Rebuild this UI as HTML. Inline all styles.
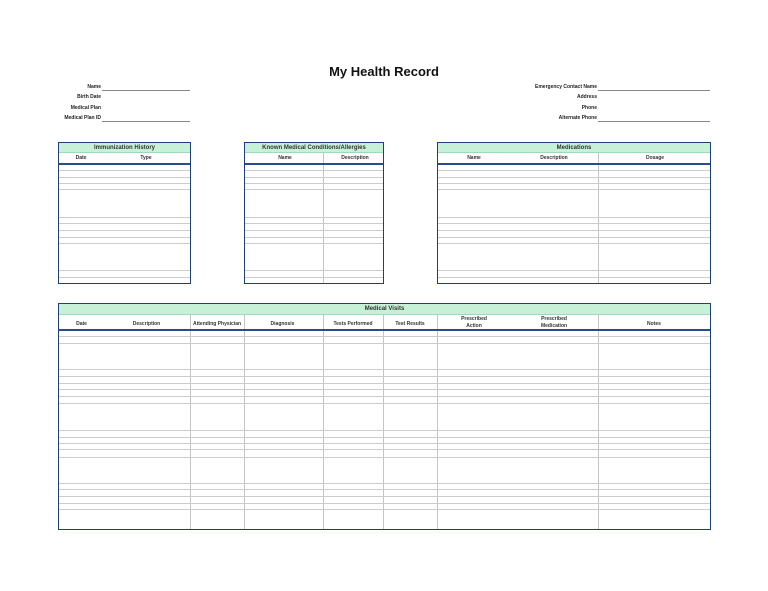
<!DOCTYPE html>
<html><head><meta charset="utf-8"><style>
*{margin:0;padding:0;box-sizing:border-box}
body{width:768px;height:591px;background:#fff;position:relative;overflow:hidden;font-family:"Liberation Sans",Arial,sans-serif;font-weight:bold;color:#222}
.a{position:absolute}
.t{position:absolute;font-size:13px;top:64px;left:0;width:768px;text-align:center;color:#111}
.lb{position:absolute;font-size:5px;text-align:right;white-space:nowrap}
.ul{position:absolute;height:1px;background:#888}
.box{position:absolute;border:1.5px solid #1f3f7a}
.hd{position:absolute;left:0;right:0;top:0;height:10px;background:#c6f0d8;font-size:6px;text-align:center;line-height:10px;color:#333;border-bottom:1px solid #9fd9b8}
.hl{position:absolute;left:0;right:0;height:1px;background:#ccc}
.dl{position:absolute;left:0;right:0;height:1.5px;background:#2a4d88}
.vl{position:absolute;top:10px;bottom:0;width:1px;background:#c4c4c4}
.ch{position:absolute;font-size:5px;text-align:center;white-space:nowrap;color:#333}
</style></head><body>
<div class="t">My Health Record</div>

<div class="lb" style="right:667px;top:84px">Name</div><div class="ul" style="left:102px;width:88px;top:90px"></div>
<div class="lb" style="right:667px;top:94px">Birth Date</div>
<div class="lb" style="right:667px;top:105px">Medical Plan</div>
<div class="lb" style="right:667px;top:115px">Medical Plan ID</div><div class="ul" style="left:102px;width:88px;top:121px"></div>

<div class="lb" style="right:171px;top:84px">Emergency Contact Name</div><div class="ul" style="left:598px;width:112px;top:90px"></div>
<div class="lb" style="right:171px;top:94px">Address</div>
<div class="lb" style="right:171px;top:105px">Phone</div>
<div class="lb" style="right:171px;top:115px">Alternate Phone</div><div class="ul" style="left:598px;width:112px;top:121px"></div>

<!-- Immunization -->
<div class="box" style="left:58px;top:142px;width:133px;height:142px">
<div class="hd">Immunization History</div>
<div class="ch" style="left:10px;top:12px;width:24px">Date</div>
<div class="ch" style="left:75px;top:12px;width:24px">Type</div>
<div class="dl" style="top:20px"></div>
<div class="hl" style="top:27px"></div><div class="hl" style="top:34px"></div><div class="hl" style="top:40px"></div><div class="hl" style="top:46px"></div><div class="hl" style="top:74px"></div><div class="hl" style="top:80px"></div><div class="hl" style="top:87px"></div><div class="hl" style="top:94px"></div><div class="hl" style="top:100px"></div><div class="hl" style="top:127px"></div><div class="hl" style="top:134px"></div>
</div>

<!-- Conditions -->
<div class="box" style="left:244px;top:142px;width:140px;height:142px">
<div class="hd">Known Medical Conditions/Allergies</div>
<div class="vl" style="left:78px"></div>
<div class="ch" style="left:20px;top:12px;width:40px">Name</div>
<div class="ch" style="left:85px;top:12px;width:50px">Description</div>
<div class="dl" style="top:20px"></div>
<div class="hl" style="top:27px"></div><div class="hl" style="top:34px"></div><div class="hl" style="top:40px"></div><div class="hl" style="top:46px"></div><div class="hl" style="top:74px"></div><div class="hl" style="top:80px"></div><div class="hl" style="top:87px"></div><div class="hl" style="top:94px"></div><div class="hl" style="top:100px"></div><div class="hl" style="top:127px"></div><div class="hl" style="top:134px"></div>
</div>

<!-- Medications -->
<div class="box" style="left:437px;top:142px;width:274px;height:142px">
<div class="hd">Medications</div>
<div class="vl" style="left:160px"></div>
<div class="ch" style="left:16px;top:12px;width:40px">Name</div>
<div class="ch" style="left:91px;top:12px;width:50px">Description</div>
<div class="ch" style="left:192px;top:12px;width:50px">Dosage</div>
<div class="dl" style="top:20px"></div>
<div class="hl" style="top:27px"></div><div class="hl" style="top:34px"></div><div class="hl" style="top:40px"></div><div class="hl" style="top:46px"></div><div class="hl" style="top:74px"></div><div class="hl" style="top:80px"></div><div class="hl" style="top:87px"></div><div class="hl" style="top:94px"></div><div class="hl" style="top:100px"></div><div class="hl" style="top:127px"></div><div class="hl" style="top:134px"></div>
</div>

<!-- Medical Visits -->
<div class="box" style="left:58px;top:303px;width:653px;height:227px">
<div class="hd" style="height:11px;line-height:11px">Medical Visits</div>
<div class="vl" style="left:131px"></div><div class="vl" style="left:185px"></div><div class="vl" style="left:264px"></div><div class="vl" style="left:324px"></div><div class="vl" style="left:378px"></div><div class="vl" style="left:539px"></div>
<div class="ch" style="left:5px;top:17px;width:35px">Date</div>
<div class="ch" style="left:60px;top:17px;width:55px">Description</div>
<div class="ch" style="left:131px;top:17px;width:54px">Attending Physician</div>
<div class="ch" style="left:196px;top:17px;width:55px">Diagnosis</div>
<div class="ch" style="left:264px;top:17px;width:60px">Tests Performed</div>
<div class="ch" style="left:324px;top:17px;width:54px">Test Results</div>
<div class="ch" style="left:390px;top:12px;width:50px;line-height:7px">Prescribed<br>Action</div>
<div class="ch" style="left:470px;top:12px;width:50px;line-height:7px">Prescribed<br>Medication</div>
<div class="ch" style="left:560px;top:17px;width:70px">Notes</div>
<div class="dl" style="top:25px"></div>
<div class="hl" style="top:32px"></div><div class="hl" style="top:39px"></div><div class="hl" style="top:65px"></div><div class="hl" style="top:72px"></div><div class="hl" style="top:79px"></div><div class="hl" style="top:85px"></div><div class="hl" style="top:92px"></div><div class="hl" style="top:99px"></div><div class="hl" style="top:126px"></div><div class="hl" style="top:133px"></div><div class="hl" style="top:139px"></div><div class="hl" style="top:145px"></div><div class="hl" style="top:153px"></div><div class="hl" style="top:179px"></div><div class="hl" style="top:185px"></div><div class="hl" style="top:192px"></div><div class="hl" style="top:199px"></div><div class="hl" style="top:205px"></div>
</div>
</body></html>
